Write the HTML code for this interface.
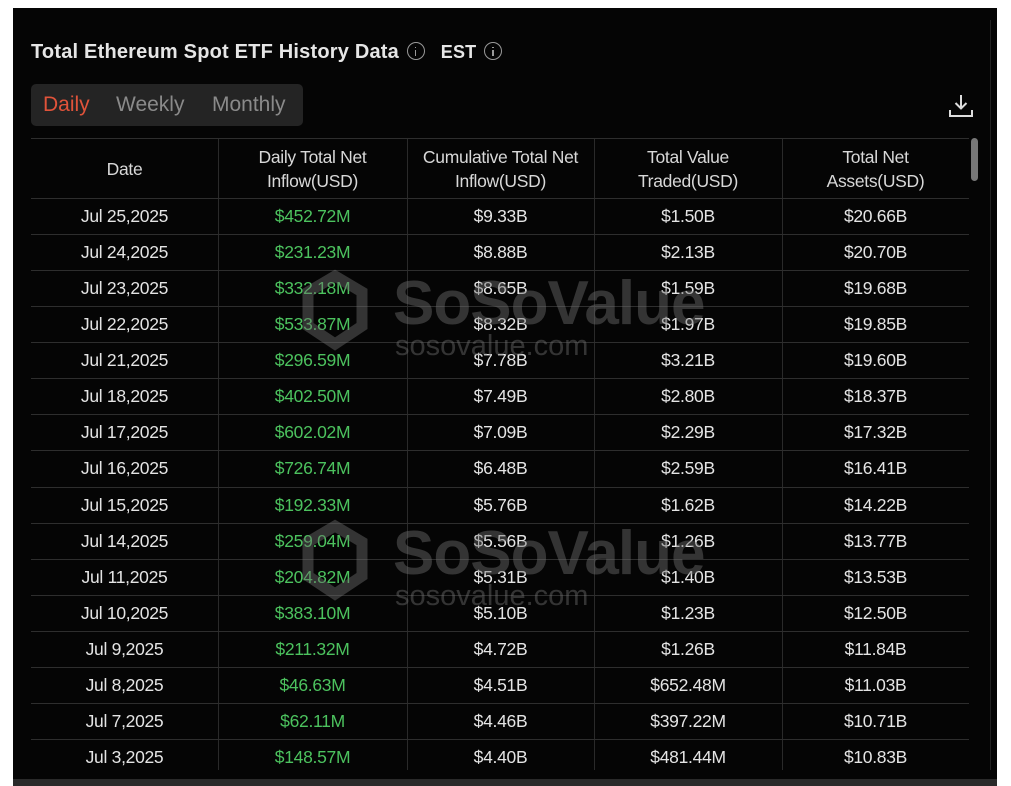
<!DOCTYPE html>
<html><head><meta charset="utf-8"><style>
body{margin:0;width:1011px;height:786px;background:#fff;position:relative;overflow:hidden;font-family:"Liberation Sans",sans-serif;}
.panel{position:absolute;left:13px;top:8px;width:984px;height:773px;background:#050505;}
.strip{position:absolute;left:13px;top:779px;width:984px;height:7px;background:#2a2a2a;}
.title{position:absolute;left:31px;top:41px;color:#e6e6e6;font-weight:bold;font-size:20px;letter-spacing:0.2px;}
.info{display:inline-block;width:18px;height:18px;border:1.3px solid #999;border-radius:50%;box-sizing:border-box;position:relative;vertical-align:-2px;margin-left:8px;}
.info:after{content:"";position:absolute;left:7px;top:6.5px;width:1.5px;height:6px;background:#999;}
.info:before{content:"";position:absolute;left:7px;top:3.5px;width:1.5px;height:1.5px;background:#999;}
.tabs{position:absolute;left:31px;top:84px;width:272px;height:42px;background:#242424;border-radius:5px;font-size:21px;}
.tabs span{position:absolute;top:9px;}
.hl{position:absolute;left:31px;width:938px;height:1px;background:#2e2e2e;}
.vl{position:absolute;width:1px;background:#2a2a2a;top:138px;height:632px;}
.cell{position:absolute;text-align:center;color:#e4e4e4;font-size:17.5px;letter-spacing:-0.3px;}
.g{color:#4cc25e;}
.h{color:#d8d8d8;font-size:17.5px;line-height:24px;}
.wm{position:absolute;color:rgba(110,110,110,0.45);font-weight:bold;}
</style></head><body>
<div class="panel"></div>
<div class="strip"></div>
<div class="title">Total Ethereum Spot ETF History Data<span class="info"></span> <span style="margin-left:10px;font-size:18px">EST</span><span class="info"></span></div>
<div class="tabs"><span style="left:12px;color:#e0533a">Daily</span><span style="left:85px;color:#8a8a8a">Weekly</span><span style="left:181px;color:#8a8a8a">Monthly</span></div>
<svg style="position:absolute;left:947px;top:92px" width="28" height="28" viewBox="0 0 28 28" fill="none" stroke="#ddd" stroke-width="2"><path d="M14 3v13M8.5 11l5.5 5.5 5.5-5.5M3 18v6h22v-6"/></svg>
<div style="position:absolute;left:971px;top:138px;width:7px;height:43px;background:#777;border-radius:4px"></div>
<div style="position:absolute;left:990px;top:20px;width:1px;height:750px;background:#222"></div>
<div id="t"></div>
<div class="wm" style="left:393px;top:268px;font-size:62px;letter-spacing:-1px">SoSoValue</div>
<div class="wm" style="left:395px;top:330px;font-size:29px;font-weight:normal">sosovalue.com</div>
<div class="wm" style="left:393px;top:518px;font-size:62px;letter-spacing:-1px">SoSoValue</div>
<div class="wm" style="left:395px;top:580px;font-size:29px;font-weight:normal">sosovalue.com</div>
<svg style="position:absolute;left:300px;top:268px" width="70" height="90" viewBox="0 0 70 90" fill="none" stroke="rgba(110,110,110,0.45)" stroke-width="11"><path d="M35 8L62 24v34L35 76 8 58V24z"/></svg>
<svg style="position:absolute;left:300px;top:518px" width="70" height="90" viewBox="0 0 70 90" fill="none" stroke="rgba(110,110,110,0.45)" stroke-width="11"><path d="M35 8L62 24v34L35 76 8 58V24z"/></svg>
<script>
var rows=[["Jul 25,2025","$452.72M","$9.33B","$1.50B","$20.66B"],["Jul 24,2025","$231.23M","$8.88B","$2.13B","$20.70B"],["Jul 23,2025","$332.18M","$8.65B","$1.59B","$19.68B"],["Jul 22,2025","$533.87M","$8.32B","$1.97B","$19.85B"],["Jul 21,2025","$296.59M","$7.78B","$3.21B","$19.60B"],["Jul 18,2025","$402.50M","$7.49B","$2.80B","$18.37B"],["Jul 17,2025","$602.02M","$7.09B","$2.29B","$17.32B"],["Jul 16,2025","$726.74M","$6.48B","$2.59B","$16.41B"],["Jul 15,2025","$192.33M","$5.76B","$1.62B","$14.22B"],["Jul 14,2025","$259.04M","$5.56B","$1.26B","$13.77B"],["Jul 11,2025","$204.82M","$5.31B","$1.40B","$13.53B"],["Jul 10,2025","$383.10M","$5.10B","$1.23B","$12.50B"],["Jul 9,2025","$211.32M","$4.72B","$1.26B","$11.84B"],["Jul 8,2025","$46.63M","$4.51B","$652.48M","$11.03B"],["Jul 7,2025","$62.11M","$4.46B","$397.22M","$10.71B"],["Jul 3,2025","$148.57M","$4.40B","$481.44M","$10.83B"]];
var cx=[31,218,407,594,782,969],h="";
var hd=["Date","Daily Total Net<br>Inflow(USD)","Cumulative Total Net<br>Inflow(USD)","Total Value<br>Traded(USD)","Total Net<br>Assets(USD)"];
for(var i=1;i<5;i++)h+='<div class="vl" style="left:'+cx[i]+'px"></div>';
h+='<div class="hl" style="top:138px"></div>';
for(var i=0;i<5;i++)h+='<div class="cell h" style="left:'+cx[i]+'px;width:'+(cx[i+1]-cx[i])+'px;top:'+(i?145:157)+'px">'+hd[i]+'</div>';
for(var r=0;r<16;r++){var y=198+r*36.07;h+='<div class="hl" style="top:'+Math.round(y)+'px"></div>';
for(var i=0;i<5;i++)h+='<div class="cell'+(i==1?' g':'')+'" style="left:'+cx[i]+'px;width:'+(cx[i+1]-cx[i])+'px;top:'+Math.round(y+8)+'px">'+rows[r][i]+'</div>';}
document.getElementById('t').innerHTML=h;
</script>
</body></html>
